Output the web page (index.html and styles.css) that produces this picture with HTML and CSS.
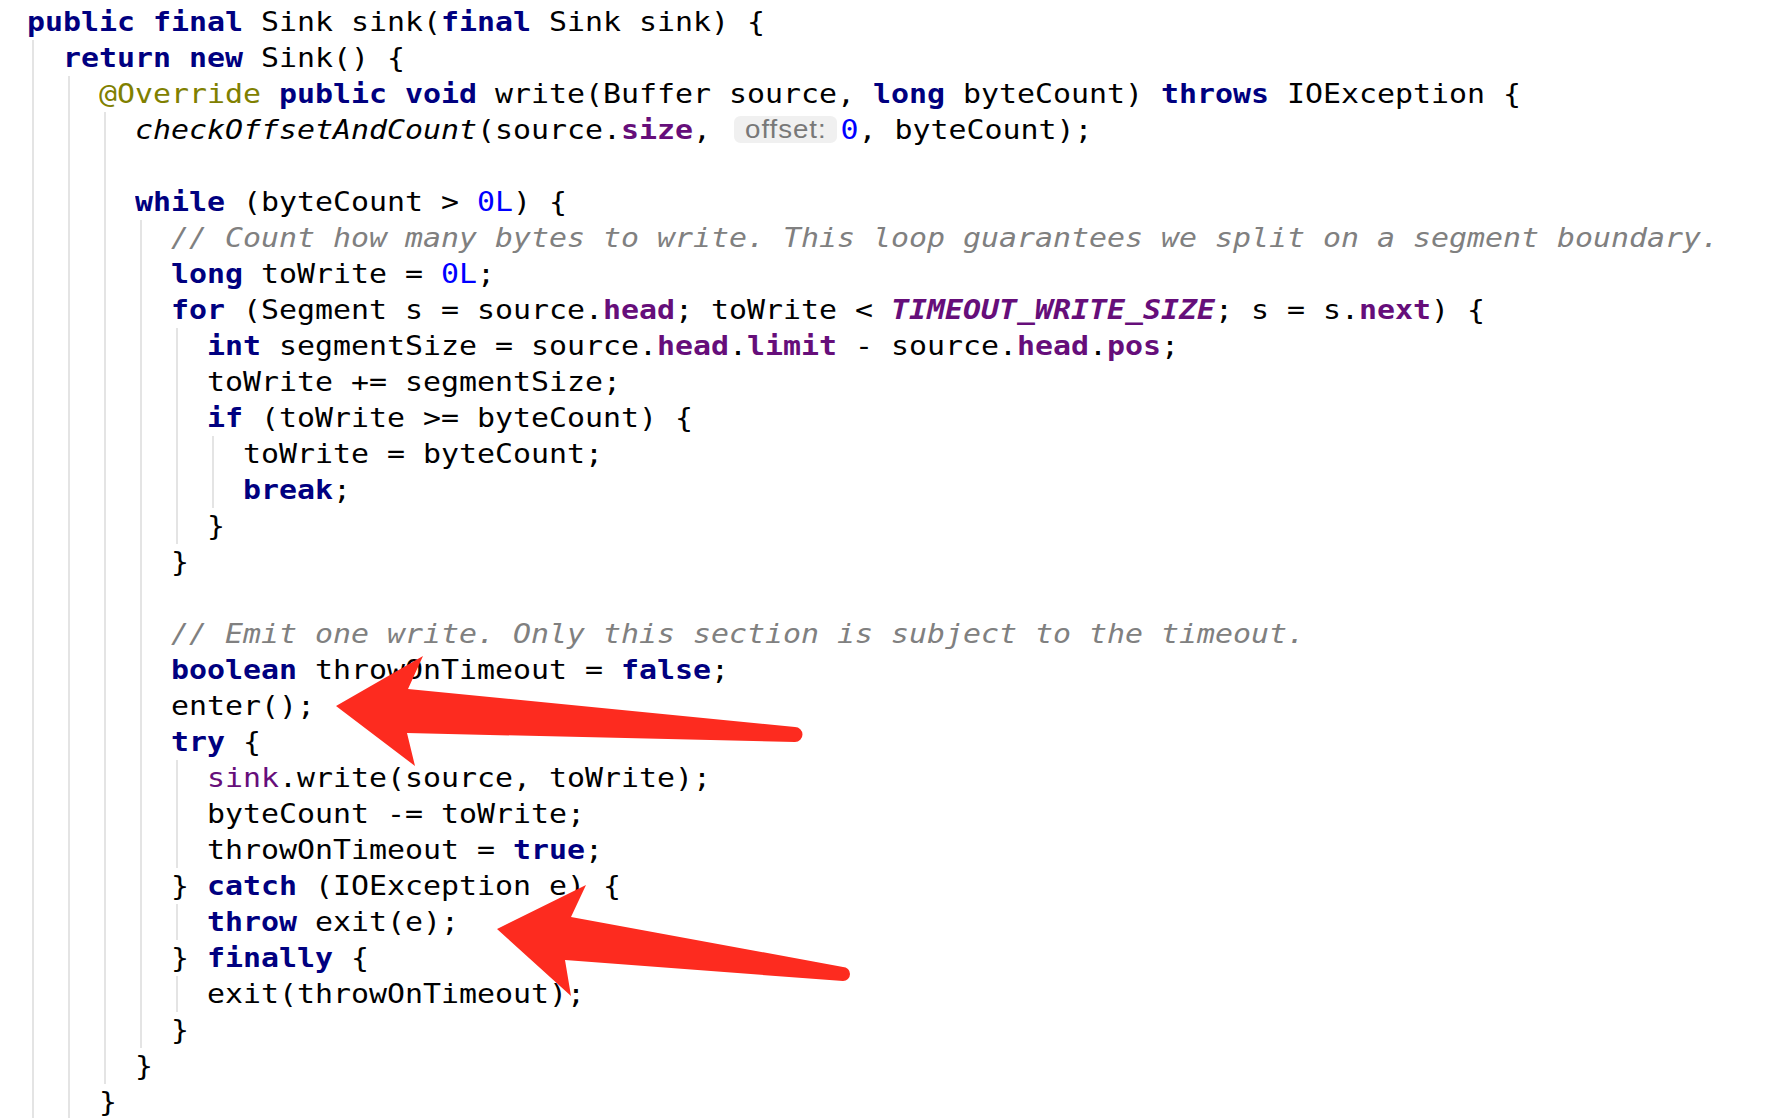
FILE: index.html
```html
<!DOCTYPE html>
<html lang="en">
<head>
<meta charset="utf-8">
<title>Sink</title>
<link rel="stylesheet" href="styles.css">
</head>
<body>
<div class="editor">
<div class="code">
<div class="ln"><span class="kw">public final</span> Sink sink(<span class="kw">final</span> Sink sink) {</div>
<div class="blk">
  <div class="ln"><span class="kw">return new</span> Sink() {</div>
  <div class="blk">
    <div class="ln"><span class="an">@Override</span> <span class="kw">public void</span> write(Buffer source, <span class="kw">long</span> byteCount) <span class="kw">throws</span> IOException {</div>
    <div class="blk">
      <div class="ln"><span class="st">checkOffsetAndCount</span>(source.<span class="fd">size</span>, <span class="hint">offset:</span><span class="num">0</span>, byteCount);</div>
      <div class="ln"></div>
      <div class="ln"><span class="kw">while</span> (byteCount &gt; <span class="num">0L</span>) {</div>
      <div class="blk">
        <div class="ln"><span class="cm">// Count how many bytes to write. This loop guarantees we split on a segment boundary.</span></div>
        <div class="ln"><span class="kw">long</span> toWrite = <span class="num">0L</span>;</div>
        <div class="ln"><span class="kw">for</span> (Segment s = source.<span class="fd">head</span>; toWrite &lt; <span class="cst">TIMEOUT_WRITE_SIZE</span>; s = s.<span class="fd">next</span>) {</div>
        <div class="blk">
          <div class="ln"><span class="kw">int</span> segmentSize = source.<span class="fd">head</span>.<span class="fd">limit</span> - source.<span class="fd">head</span>.<span class="fd">pos</span>;</div>
          <div class="ln">toWrite += segmentSize;</div>
          <div class="ln"><span class="kw">if</span> (toWrite &gt;= byteCount) {</div>
          <div class="blk">
            <div class="ln">toWrite = byteCount;</div>
            <div class="ln"><span class="kw">break</span>;</div>
          </div>
          <div class="ln">}</div>
        </div>
        <div class="ln">}</div>
        <div class="ln"></div>
        <div class="ln"><span class="cm">// Emit one write. Only this section is subject to the timeout.</span></div>
        <div class="ln"><span class="kw">boolean</span> throwOnTimeout = <span class="kw">false</span>;</div>
        <div class="ln">enter();</div>
        <div class="ln"><span class="kw">try</span> {</div>
        <div class="blk">
          <div class="ln"><span class="cap">sink</span>.write(source, toWrite);</div>
          <div class="ln">byteCount -= toWrite;</div>
          <div class="ln">throwOnTimeout = <span class="kw">true</span>;</div>
        </div>
        <div class="ln">} <span class="kw">catch</span> (IOException e) {</div>
        <div class="blk">
          <div class="ln"><span class="kw">throw</span> exit(e);</div>
        </div>
        <div class="ln">} <span class="kw">finally</span> {</div>
        <div class="blk">
          <div class="ln">exit(throwOnTimeout);</div>
        </div>
        <div class="ln">}</div>
      </div>
      <div class="ln">}</div>
    </div>
    <div class="ln">}</div>
  </div>
</div>
</div>
<svg class="marks" width="1790" height="1118" viewBox="0 0 1790 1118" aria-hidden="true">
  <path class="arrow" d="M336 706 L423 656 L408 689 L795 727 A7.5 7.5 0 0 1 795 742 L407 733 L415 766 Z"/>
  <path class="arrow" d="M497 929 L586 885 L571 917 L843 967 A7 7 0 0 1 843 981 L565 960 L571 996 Z"/>
</svg>
</div>
</body>
</html>
```
FILE: styles.css
```css
html, body {
  margin: 0;
  padding: 0;
  background: #ffffff;
  overflow: hidden;
}

.editor {
  position: relative;
  width: 1790px;
  height: 1118px;
  overflow: hidden;
}

.code {
  padding: 4px 0 0 27px;
  font-family: "DejaVu Sans Mono", "Liberation Mono", monospace;
  font-size: 27px;
  line-height: 36px;
  color: #000000;
}

/* The editor font is drawn with slightly wide cells: 18px per column */
.ln {
  height: 36px;
  white-space: pre;
  transform: scaleX(1.1073);
  transform-origin: 0 0;
}

.blk {
  margin-left: 5px;
  padding-left: 29px;
  border-left: 2px solid #e4e4e4;
}

.kw {
  color: #000080;
  font-weight: bold;
}

.fd {
  color: #660e7a;
  font-weight: bold;
}

.cst {
  color: #660e7a;
  font-weight: bold;
  font-style: italic;
}

.cap {
  color: #660e7a;
}

.num {
  color: #0000ff;
}

.cm {
  color: #808080;
  font-style: italic;
}

.an {
  color: #808000;
}

.st {
  font-style: italic;
}

.hint {
  display: inline-block;
  height: 27px;
  margin: 0 3.6px 0 4.5px;
  padding: 0 9px 0 10px;
  border-radius: 6px;
  background: #f0f0f0;
  color: #787878;
  font-family: "Liberation Sans", Arial, sans-serif;
  font-size: 25px;
  letter-spacing: 0.85px;
  line-height: 27px;
  vertical-align: 1px;
}

.marks {
  position: absolute;
  top: 0;
  left: 0;
  pointer-events: none;
}

.arrow {
  fill: #fd2b1f;
}
```
